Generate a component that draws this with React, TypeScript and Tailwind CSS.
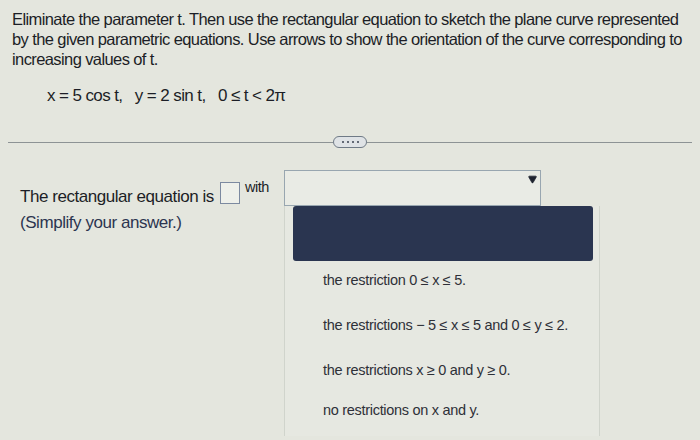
import { Triangle } from "lucide-react";

const options = [
  { text: "the restriction 0 ≤ x ≤ 5.", gap: "mt-0" },
  { text: "the restrictions  − 5 ≤ x ≤ 5 and 0 ≤ y ≤ 2.", gap: "mt-[25px]" },
  { text: "the restrictions x ≥ 0 and y ≥ 0.", gap: "mt-[25px]" },
  { text: "no restrictions on x and y.", gap: "mt-[20px]" },
];

export default function App() {
  return (
    <div className="h-[440px] w-[700px] overflow-hidden bg-[#e4e6de] text-[#1c1e26] font-['Liberation_Sans',Arial,sans-serif]">
      <div className="whitespace-nowrap px-[12px] pt-[9px] leading-[20px]">
        <p className="text-[16.5px] tracking-[-0.6px]">
          Eliminate the parameter t. Then use the rectangular equation to sketch the plane curve represented
          <br />
          by the given parametric equations. Use arrows to show the orientation of the curve corresponding to
          <br />
          increasing values of t.
        </p>
        <p className="mt-[17px] pl-[35px] text-[17px] tracking-[-0.6px]">
          x = 5 cos t,&nbsp;&nbsp; y = 2 sin t,&nbsp;&nbsp; 0 ≤ t &lt; 2π
        </p>
      </div>

      <div className="mt-[30px] flex items-center px-[8px]">
        <div className="h-px flex-1 bg-[#8d9395]" />
        <div className="flex h-[12px] w-[34px] items-center justify-center gap-[3px] rounded-full border border-[#6f7a86] bg-[#dfe3e6]">
          <span className="h-[2px] w-[2px] rounded-full bg-[#3a4250]" />
          <span className="h-[2px] w-[2px] rounded-full bg-[#3a4250]" />
          <span className="h-[2px] w-[2px] rounded-full bg-[#3a4250]" />
          <span className="h-[2px] w-[2px] rounded-full bg-[#3a4250]" />
        </div>
        <div className="h-px flex-1 bg-[#8d9395]" />
      </div>

      <div className="mt-[22px] flex pl-[20px]">
        <div className="w-[264px] pt-[4px] text-[17px] leading-[26px] tracking-[-0.45px]">
          <div className="flex items-end">
            <span>The rectangular equation is</span>
            <span className="mb-[6px] ml-[6px] inline-block h-[22px] w-[20px] border border-[#7c8aa0] bg-[#eef0ea]" />
            <span className="mb-[10px] ml-[5px] text-[14.5px]">with</span>
          </div>
          <div className="text-[#2c3550]">(Simplify your answer.)</div>
        </div>
        <div className="flex w-[316px] flex-col">
          <div className="flex h-[36px] w-[257px] items-start justify-end border border-[#98a6b0] bg-[#e9ebe5] pr-[3px] pt-[4px]">
            <Triangle size={9} className="rotate-180 fill-[#1f2430] text-[#1f2430]" />
          </div>
          <div className="flex h-[230px] flex-col border-l border-r border-[#d0d4cc] bg-[#e6e8e1] pl-[8px] pr-[6px]">
            <div className="h-[55px] rounded-[3px] bg-[#2a3550]" />
            <div className="flex flex-col pl-[30px] pt-[9px] text-[14.5px] leading-[20px] tracking-[-0.3px] text-[#2e3038]">
              {options.map((o) => (
                <div key={o.text} className={o.gap}>
                  {o.text}
                </div>
              ))}
            </div>
          </div>
        </div>
      </div>
    </div>
  );
}
